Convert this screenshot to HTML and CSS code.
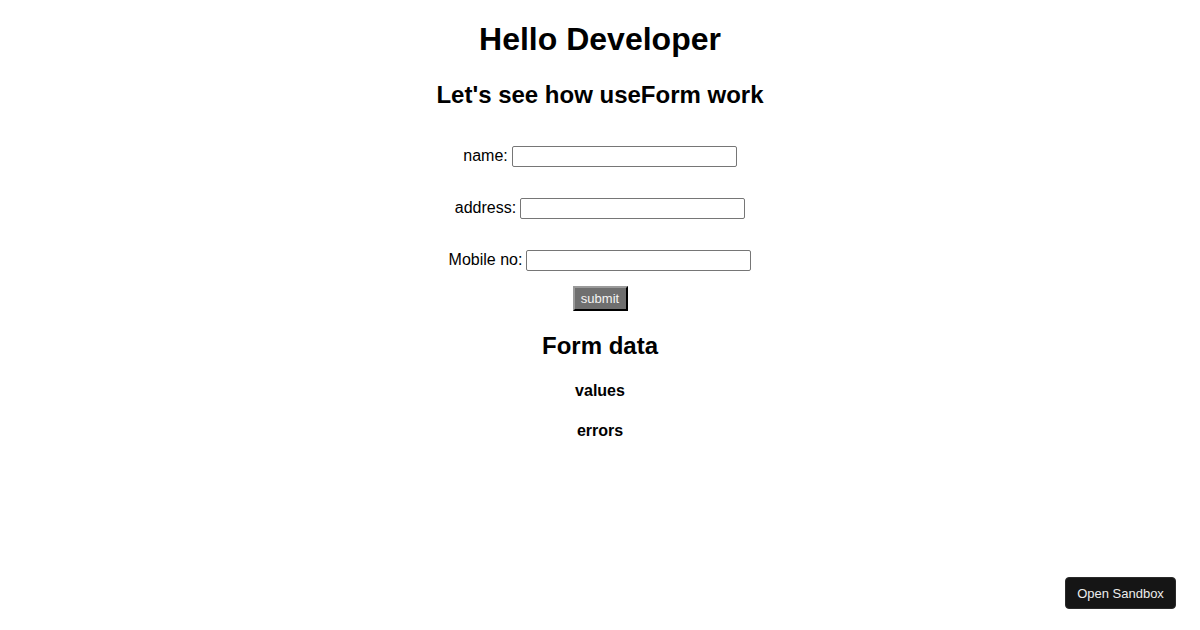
FILE: index.html
```html
<!DOCTYPE html>
<html>
<head>
<meta charset="utf-8">
<title>useForm</title>
<link rel="stylesheet" href="styles.css">
</head>
<body>
<div class="app">
  <h1>Hello Developer</h1>
  <h2 class="subtitle">Let's see how useForm work</h2>
  <form class="form">
    <div class="row"><label>name:</label><input class="field" type="text"></div>
    <div class="row"><label>address:</label><input class="field" type="text"></div>
    <div class="row"><label>Mobile no:</label><input class="field" type="text"></div>
    <button class="submit" type="button">submit</button>
  </form>
  <h2 class="data-title">Form data</h2>
  <h4>values</h4>
  <h4>errors</h4>
</div>
<a class="open-sandbox">Open Sandbox</a>
</body>
</html>
```
FILE: styles.css
```css
html, body {
  background: #fff;
}
body {
  margin: 0 8px;
  font-family: "Liberation Sans", Arial, sans-serif;
  color: #000;
}
.app {
  display: flow-root;
  text-align: center;
}
h1 {
  font-size: 32px;
  margin: 21.44px 0;
}
h2 {
  font-size: 24px;
  margin: 19.92px 0;
}
.subtitle {
  margin-top: 23px;
  margin-bottom: 19px;
}
.data-title {
  margin-top: 21px;
  margin-bottom: 22px;
}
h4 {
  font-size: 16px;
  margin: 22px 0;
}
.form {
  display: flex;
  flex-direction: column;
  align-items: center;
  padding-top: 2px;
}
.row {
  height: 52px;
  display: flex;
  align-items: center;
  justify-content: center;
  gap: 4px;
  font-size: 16px;
}
.field {
  box-sizing: border-box;
  width: 225px;
  height: 21px;
  border: 1px solid #767676;
  border-radius: 2px;
  padding: 1px 2px;
  margin: 0;
  background: #fff;
}
.submit {
  box-sizing: border-box;
  width: 55px;
  height: 25px;
  background: #6f6f6f;
  color: #f4f4f4;
  font-family: "Liberation Sans", Arial, sans-serif;
  font-size: 13px;
  border: 2px outset #9a9a9a;
  border-right-color: #1e1e1e;
  border-bottom-color: #1e1e1e;
  padding: 0;
  margin: 0;
}
.open-sandbox {
  position: fixed;
  right: 24px;
  bottom: 21px;
  box-sizing: border-box;
  width: 111px;
  height: 32px;
  display: flex;
  align-items: center;
  justify-content: center;
  background: #151515;
  border: 1px solid #2a2a2a;
  border-radius: 4px;
  color: #ececec;
  font-family: "Liberation Sans", Arial, sans-serif;
  font-size: 13px;
}
```
